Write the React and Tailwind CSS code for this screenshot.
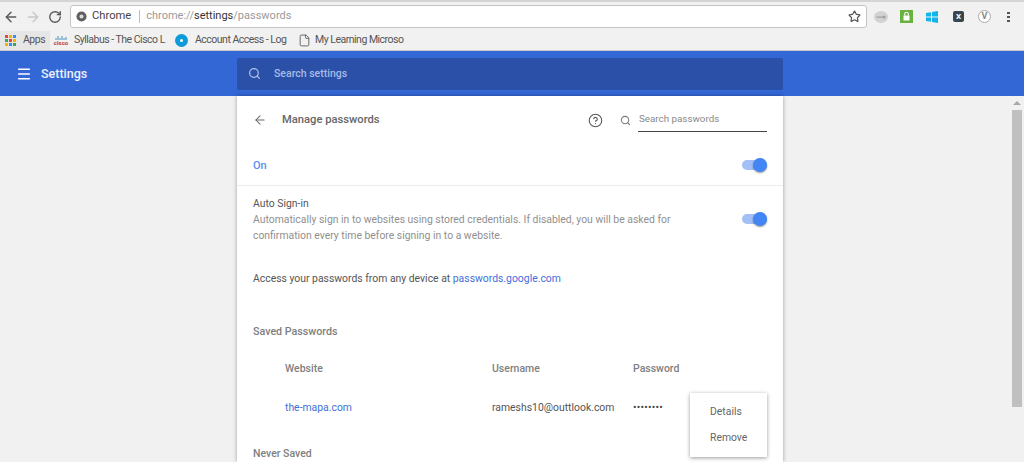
import React from "react";
import { ArrowLeft, ArrowRight, RotateCw, Star, Menu, Search, File, CircleHelp } from "lucide-react";

const Toggle = () => (
  <div className="relative w-[25px] h-[14px] flex items-center">
    <div className="w-full h-[10px] rounded-full bg-[#a3bff5]" />
    <div className="absolute right-0 top-0 w-[14px] h-[14px] rounded-full bg-[#4285f4] shadow-[0_1px_2px_rgba(0,0,0,0.4)]" />
  </div>
);

const AppsIcon = () => {
  const colors = ["#e8453c", "#f4b400", "#3c8cf0", "#34a853", "#e8453c", "#f4b400", "#f4b400", "#3c8cf0", "#34a853"];
  return (
    <div className="grid grid-cols-3 gap-[1px] w-[11px]">
      {colors.map((c, i) => (
        <div key={i} className="w-[3px] h-[3px]" style={{ backgroundColor: c }} />
      ))}
    </div>
  );
};

const Toolbar = () => (
  <div className="h-[30px] pt-[1px] flex items-center bg-[#f1f1f1] border-t-[2px] border-[#d4d4d4]">
    <div className="w-[70px] flex items-center pl-[3px] gap-[6px] shrink-0">
      <ArrowLeft className="w-[16px] h-[16px] text-[#5a5a5a]" strokeWidth={2.2} />
      <ArrowRight className="w-[16px] h-[16px] text-[#c8c8c8]" strokeWidth={2.2} />
      <RotateCw className="w-[14px] h-[14px] ml-[1px] text-[#5a5a5a]" strokeWidth={2.4} />
    </div>
    <div className="w-[797px] h-[23px] bg-white border border-[#c4c4c4] rounded-[3px] flex items-center pl-[5px] pr-[3px] shrink-0">
      <svg viewBox="0 0 12 12" className="w-[11px] h-[11px] shrink-0">
        <circle cx="6" cy="6" r="5.5" fill="#5f5f5f" />
        <circle cx="6" cy="6" r="2.2" fill="#dcdcdc" />
      </svg>
      <span className="ml-[5px] text-[11.2px] text-[#444]">Chrome</span>
      <div className="w-px h-[13px] bg-[#bdbdbd] ml-[8px] mr-[6px]" />
      <span className="text-[11px] text-[#9a9a9a]">
        chrome://<span className="text-[#333]">settings</span>/passwords
      </span>
      <Star className="ml-auto mr-[2px] w-[13px] h-[13px] text-[#555]" strokeWidth={2.2} />
    </div>
    <div className="flex-1 flex items-center pl-[7px]">
      <svg viewBox="0 0 14 12" className="w-[14px] h-[12px]">
        <ellipse cx="7" cy="6" rx="7" ry="6" fill="#d2d2d2" />
        <rect x="2.5" y="5.5" width="6" height="1.2" fill="#a0a0a0" />
        <circle cx="10" cy="6" r="1.6" fill="#a0a0a0" />
      </svg>
      <svg viewBox="0 0 13 13" className="w-[13px] h-[13px] ml-[12px]">
        <rect width="13" height="13" fill="#69b23f" />
        <rect x="3.5" y="5.5" width="6" height="5" fill="#fff" />
        <path d="M4.7 5.5V4a1.8 1.8 0 0 1 3.6 0v1.5" fill="none" stroke="#fff" strokeWidth="1.1" />
      </svg>
      <svg viewBox="0 0 12 12" className="w-[12px] h-[12px] ml-[13px]">
        <path d="M0 2l5-.8V5.6H0zM6 1l6-1v5.6H6zM0 6.4h5v4.4L0 10zM6 6.4h6V12l-6-1z" fill="#12b5ea" />
      </svg>
      <div className="w-[11px] h-[11px] ml-[15px] rounded-[2px] bg-[#37474f] flex items-center justify-center text-white text-[8px] font-bold leading-none">
        X
      </div>
      <div className="w-[13px] h-[13px] ml-[14px] rounded-full border border-[#aaa] bg-white flex items-center justify-center text-[#888] text-[9px] font-bold leading-none">
        V
      </div>
      <div className="ml-[16px] flex flex-col gap-[2px]">
        <div className="w-[3px] h-[2px] bg-[#555]" />
        <div className="w-[3px] h-[2px] bg-[#555]" />
        <div className="w-[3px] h-[2px] bg-[#555]" />
      </div>
    </div>
  </div>
);

const Bookmarks = () => (
  <div className="h-[20px] flex items-center bg-[#f1f1f1] text-[10.5px] tracking-[-0.5px] text-[#555]">
    <div className="w-[50px] h-[19px] bg-[#e6e6e6] flex items-center pl-[5px] gap-[7px] shrink-0">
      <AppsIcon />
      <span>Apps</span>
    </div>
    <div className="w-[14px] ml-[4px] flex flex-col items-center leading-none tracking-normal shrink-0">
      <svg viewBox="0 0 13 5" className="w-[13px] h-[5px]">
        <path d="M1 5V3M3 5V1M5 5V3M7 5V1M9 5V3M11 5V2" stroke="#4a90c2" strokeWidth="1" />
      </svg>
      <span className="text-[6px] font-bold text-[#c0392b]">cisco</span>
    </div>
    <span className="ml-[6px] whitespace-nowrap shrink-0 w-[95px]">Syllabus - The Cisco L</span>
    <div className="ml-[6px] w-[13px] h-[13px] rounded-full bg-[#0f9bd7] flex items-center justify-center shrink-0">
      <div className="w-[3px] h-[3px] rounded-full bg-white" />
    </div>
    <span className="ml-[7px] whitespace-nowrap shrink-0 w-[92px]">Account Access - Log</span>
    <File className="ml-[11px] w-[13px] h-[13px] text-[#555] shrink-0" strokeWidth={1.6} />
    <span className="ml-[4px] whitespace-nowrap shrink-0">My Learning Microso</span>
  </div>
);

const SettingsHeader = () => (
  <div className="h-[46px] bg-[#3367d6] flex items-center border-t border-[#c9c9c9]">
    <div className="w-[237px] flex items-center pl-[16px] pt-[1px] shrink-0">
      <Menu className="w-[16px] h-[16px] text-white" strokeWidth={2.2} />
      <span className="ml-[9px] text-[12.5px] font-medium text-white/90">Settings</span>
    </div>
    <div className="w-[546px] h-[32px] rounded-[2px] bg-[#2a50a8] flex items-center pl-[11px]">
      <Search className="w-[13px] h-[13px] text-[#b5c6ea]" strokeWidth={2.2} />
      <span className="ml-[13px] text-[10.5px] font-medium text-[#a9bbe6]">Search settings</span>
    </div>
  </div>
);

const PasswordsCard = () => (
  <div className="relative w-[546px] h-[366px] bg-white shadow-[0_0_4px_rgba(0,0,0,0.35)] shrink-0 text-[10.4px]">
    <div className="h-[47px] pl-[16px] pr-[16px] pt-[1px] flex items-center">
      <ArrowLeft className="w-[14px] h-[14px] text-[#666]" strokeWidth={1.8} />
      <span className="ml-[15px] text-[11.2px] text-[#666] font-medium">Manage passwords</span>
      <CircleHelp className="ml-auto w-[15px] h-[15px] text-[#555]" strokeWidth={1.7} />
      <Search className="ml-[17px] w-[11px] h-[11px] text-[#777]" strokeWidth={2.2} />
      <div className="ml-[7px] w-[129px] h-[24px] pl-px pt-[4px] text-[9.8px] text-[#8a8a8a] border-b border-[#444]">
        Search passwords
      </div>
    </div>
    <div className="h-[43px] px-[16px] pt-[1px] flex items-center justify-between border-b border-[#ececec]">
      <span className="pt-[3px] text-[11px] text-[#5c8df0] font-medium">On</span>
      <Toggle />
    </div>
    <div className="pl-[16px] pr-[16px] pt-[10px] flex items-center justify-between">
      <div className="leading-[15.5px]">
        <div className="text-[#555]">Auto Sign-in</div>
        <div className="text-[#909090] w-[440px] leading-[16.5px]">
          Automatically sign in to websites using stored credentials. If disabled, you will be asked for confirmation every time before signing in to a website.
        </div>
      </div>
      <div className="mb-[3px]">
        <Toggle />
      </div>
    </div>
    <div className="mt-[26px] px-[16px] text-[#555] leading-[16px]">
      Access your passwords from any device at <span className="text-[#3f6fd8]">passwords.google.com</span>
    </div>
    <div className="mt-[37px] px-[16px] text-[10.7px] text-[#808080] font-medium leading-[16px]">Saved Passwords</div>
    <div className="mt-[21px] pl-[48px] flex text-[10.5px] text-[#808080] font-medium leading-[16px]">
      <span className="w-[207px]">Website</span>
      <span className="w-[141px]">Username</span>
      <span>Password</span>
    </div>
    <div className="mt-[23px] pl-[48px] flex items-center leading-[16px]">
      <span className="w-[207px] text-[#3f6fd8]">the-mapa.com</span>
      <span className="w-[141px] text-[#555]">rameshs10@outtlook.com</span>
      <span className="text-[#444] tracking-[0.25px]">••••••••</span>
    </div>
    <div className="mt-[30px] px-[16px] text-[10.5px] text-[#808080] font-medium leading-[16px]">Never Saved</div>
    <div className="absolute left-[453px] top-[297px] w-[77px] h-[64px] bg-white shadow-[0_1px_4px_rgba(0,0,0,0.4)] text-[#666] pl-[20px] pt-[11px] leading-[16px] flex flex-col gap-[10px]">
      <span>Details</span>
      <span>Remove</span>
    </div>
  </div>
);

const Scrollbar = () => (
  <div className="w-[12px] mr-[1px] ml-auto flex flex-col items-center pt-[5px] shrink-0">
    <div className="w-0 h-0 border-x-[4px] border-x-transparent border-b-[4px] border-b-[#a8a8a8]" />
    <div className="mt-[5px] w-[10px] h-[297px] bg-[#c0c0c0]" />
  </div>
);

export default function App() {
  return (
    <div className="w-[1024px] h-[462px] overflow-hidden bg-[#f1f1f1] font-['Roboto',sans-serif]">
      <Toolbar />
      <Bookmarks />
      <SettingsHeader />
      <div className="flex pl-[237px]">
        <PasswordsCard />
        <Scrollbar />
      </div>
    </div>
  );
}
